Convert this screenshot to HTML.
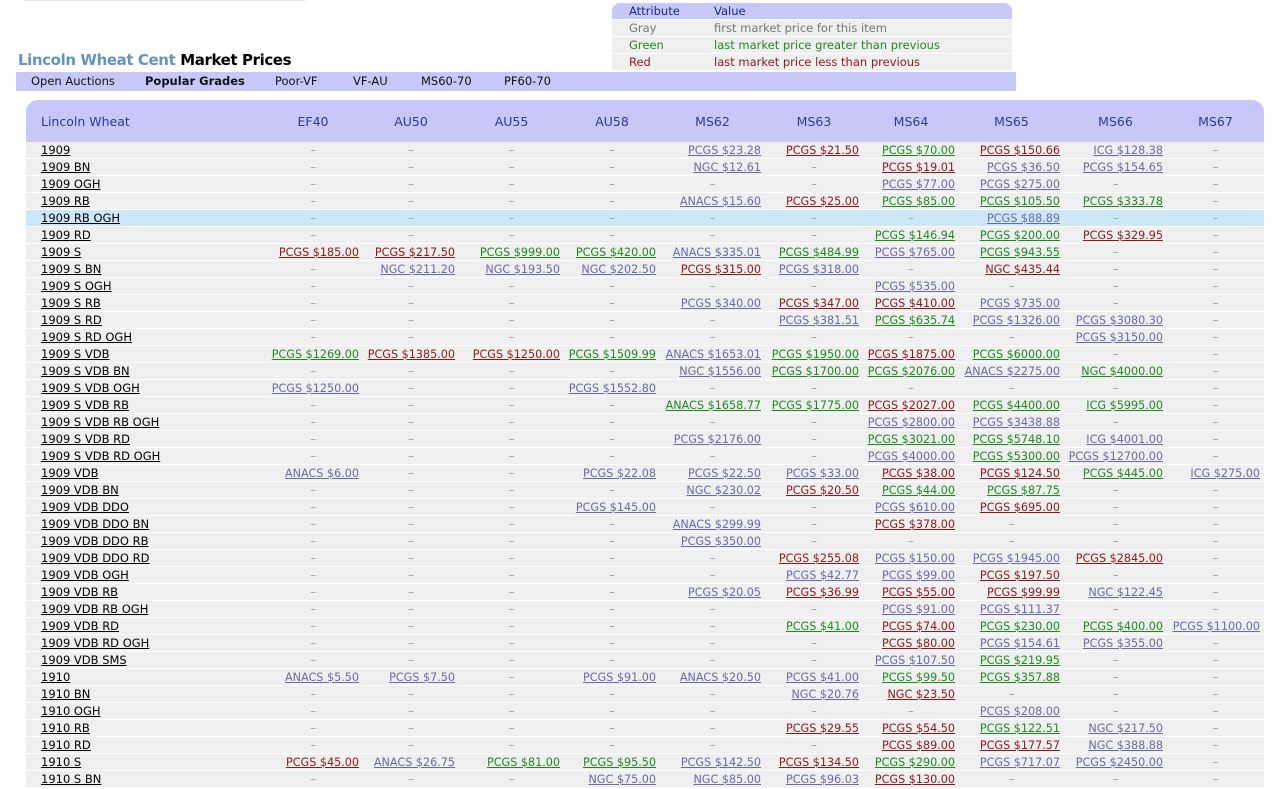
<!DOCTYPE html>
<html><head><meta charset="utf-8"><style>
body{margin:0;background:#fff;font-family:"DejaVu Sans","Liberation Sans",sans-serif;font-size:11px;width:1278px;height:789px;overflow:hidden;position:relative}
.topline{position:absolute;left:25px;top:0;width:280px;height:1px;background:#e4e4e4}
.title{position:absolute;left:18px;top:51px;font-size:15px;font-weight:bold;font-family:"DejaVu Sans",sans-serif;letter-spacing:-0.4px}
.title .a{color:#6494bc}
.nav{position:absolute;left:16px;top:72px;width:1000px;height:19px;background:#c8c8f8}
.nav span{position:absolute;top:2px;color:#111;font-size:11.5px}
.leg{position:absolute;left:612px;top:3px;width:400px;border-collapse:collapse}
.leg td{height:16px;padding:0;border-bottom:1px solid #fff;font-size:11.5px}
.leg tr.h td{background:#c8c8f8;color:#1a2a8a}
.leg tr.h td:first-child{border-top-left-radius:8px}
.leg tr.h td:last-child{border-top-right-radius:8px}
.leg tr td{background:#efefef}
.leg td.c1{width:85px;padding-left:17px}
.main{position:absolute;left:26px;top:100px;width:1238px;border-collapse:collapse;table-layout:fixed}
.main th{background:#c8c8f8;color:#2a3a9a;font-weight:normal;font-size:12.5px;height:42px;padding:0;text-align:center}
.main th:first-child{text-align:left;padding-left:15px;border-top-left-radius:12px}
.main th:last-child{border-top-right-radius:12px}
.main td{height:16px;padding:0 4px 0 0;border-bottom:1px solid #fff;background:#efefef;text-align:right;white-space:nowrap;font-size:11.2px;overflow:hidden}
.main td:first-child{text-align:left;padding-left:15px;color:#000;text-decoration:underline;font-size:11.5px}
.main td.d{text-align:center;padding:0;color:#999}
.main tr.hl td{background:#cce8f8}
.g{color:#6a6aa8;text-decoration:underline}
.G{color:#1e8a1e;text-decoration:underline}
.r{color:#8a1a1a;text-decoration:underline}
</style></head><body>
<div class="topline"></div>
<table class="leg">
<tr class="h"><td class="c1">Attribute</td><td>Value</td></tr>
<tr><td class="c1" style="color:#777">Gray</td><td style="color:#777">first market price for this item</td></tr>
<tr><td class="c1" style="color:#1e8a1e">Green</td><td style="color:#1e8a1e">last market price greater than previous</td></tr>
<tr><td class="c1" style="color:#8a1a1a">Red</td><td style="color:#8a1a1a">last market price less than previous</td></tr>
</table>
<div class="title"><span class="a">Lincoln Wheat Cent</span> Market Prices</div>
<div class="nav"><span style="left:15px">Open Auctions</span><span style="left:129px;font-weight:bold">Popular Grades</span><span style="left:259px">Poor-VF</span><span style="left:337px">VF-AU</span><span style="left:405px">MS60-70</span><span style="left:488px">PF60-70</span></div>
<table class="main">
<colgroup><col style="width:237px"><col style="width:100px"><col style="width:96px"><col style="width:105px"><col style="width:96px"><col style="width:105px"><col style="width:98px"><col style="width:96px"><col style="width:105px"><col style="width:103px"><col style="width:97px"></colgroup>
<tr><th>Lincoln Wheat</th><th>EF40</th><th>AU50</th><th>AU55</th><th>AU58</th><th>MS62</th><th>MS63</th><th>MS64</th><th>MS65</th><th>MS66</th><th>MS67</th></tr>
<tr><td>1909</td><td class="d">–</td><td class="d">–</td><td class="d">–</td><td class="d">–</td><td><span class="g">PCGS $23.28</span></td><td><span class="r">PCGS $21.50</span></td><td><span class="G">PCGS $70.00</span></td><td><span class="r">PCGS $150.66</span></td><td><span class="g">ICG $128.38</span></td><td class="d">–</td></tr>
<tr><td>1909 BN</td><td class="d">–</td><td class="d">–</td><td class="d">–</td><td class="d">–</td><td><span class="g">NGC $12.61</span></td><td class="d">–</td><td><span class="r">PCGS $19.01</span></td><td><span class="g">PCGS $36.50</span></td><td><span class="g">PCGS $154.65</span></td><td class="d">–</td></tr>
<tr><td>1909 OGH</td><td class="d">–</td><td class="d">–</td><td class="d">–</td><td class="d">–</td><td class="d">–</td><td class="d">–</td><td><span class="g">PCGS $77.00</span></td><td><span class="g">PCGS $275.00</span></td><td class="d">–</td><td class="d">–</td></tr>
<tr><td>1909 RB</td><td class="d">–</td><td class="d">–</td><td class="d">–</td><td class="d">–</td><td><span class="g">ANACS $15.60</span></td><td><span class="r">PCGS $25.00</span></td><td><span class="G">PCGS $85.00</span></td><td><span class="G">PCGS $105.50</span></td><td><span class="G">PCGS $333.78</span></td><td class="d">–</td></tr>
<tr class="hl"><td>1909 RB OGH</td><td class="d">–</td><td class="d">–</td><td class="d">–</td><td class="d">–</td><td class="d">–</td><td class="d">–</td><td class="d">–</td><td><span class="g">PCGS $88.89</span></td><td class="d">–</td><td class="d">–</td></tr>
<tr><td>1909 RD</td><td class="d">–</td><td class="d">–</td><td class="d">–</td><td class="d">–</td><td class="d">–</td><td class="d">–</td><td><span class="G">PCGS $146.94</span></td><td><span class="G">PCGS $200.00</span></td><td><span class="r">PCGS $329.95</span></td><td class="d">–</td></tr>
<tr><td>1909 S</td><td><span class="r">PCGS $185.00</span></td><td><span class="r">PCGS $217.50</span></td><td><span class="G">PCGS $999.00</span></td><td><span class="G">PCGS $420.00</span></td><td><span class="g">ANACS $335.01</span></td><td><span class="G">PCGS $484.99</span></td><td><span class="g">PCGS $765.00</span></td><td><span class="G">PCGS $943.55</span></td><td class="d">–</td><td class="d">–</td></tr>
<tr><td>1909 S BN</td><td class="d">–</td><td><span class="g">NGC $211.20</span></td><td><span class="g">NGC $193.50</span></td><td><span class="g">NGC $202.50</span></td><td><span class="r">PCGS $315.00</span></td><td><span class="g">PCGS $318.00</span></td><td class="d">–</td><td><span class="r">NGC $435.44</span></td><td class="d">–</td><td class="d">–</td></tr>
<tr><td>1909 S OGH</td><td class="d">–</td><td class="d">–</td><td class="d">–</td><td class="d">–</td><td class="d">–</td><td class="d">–</td><td><span class="g">PCGS $535.00</span></td><td class="d">–</td><td class="d">–</td><td class="d">–</td></tr>
<tr><td>1909 S RB</td><td class="d">–</td><td class="d">–</td><td class="d">–</td><td class="d">–</td><td><span class="g">PCGS $340.00</span></td><td><span class="r">PCGS $347.00</span></td><td><span class="r">PCGS $410.00</span></td><td><span class="g">PCGS $735.00</span></td><td class="d">–</td><td class="d">–</td></tr>
<tr><td>1909 S RD</td><td class="d">–</td><td class="d">–</td><td class="d">–</td><td class="d">–</td><td class="d">–</td><td><span class="g">PCGS $381.51</span></td><td><span class="G">PCGS $635.74</span></td><td><span class="g">PCGS $1326.00</span></td><td><span class="g">PCGS $3080.30</span></td><td class="d">–</td></tr>
<tr><td>1909 S RD OGH</td><td class="d">–</td><td class="d">–</td><td class="d">–</td><td class="d">–</td><td class="d">–</td><td class="d">–</td><td class="d">–</td><td class="d">–</td><td><span class="g">PCGS $3150.00</span></td><td class="d">–</td></tr>
<tr><td>1909 S VDB</td><td><span class="G">PCGS $1269.00</span></td><td><span class="r">PCGS $1385.00</span></td><td><span class="r">PCGS $1250.00</span></td><td><span class="G">PCGS $1509.99</span></td><td><span class="g">ANACS $1653.01</span></td><td><span class="G">PCGS $1950.00</span></td><td><span class="r">PCGS $1875.00</span></td><td><span class="G">PCGS $6000.00</span></td><td class="d">–</td><td class="d">–</td></tr>
<tr><td>1909 S VDB BN</td><td class="d">–</td><td class="d">–</td><td class="d">–</td><td class="d">–</td><td><span class="g">NGC $1556.00</span></td><td><span class="G">PCGS $1700.00</span></td><td><span class="G">PCGS $2076.00</span></td><td><span class="g">ANACS $2275.00</span></td><td><span class="G">NGC $4000.00</span></td><td class="d">–</td></tr>
<tr><td>1909 S VDB OGH</td><td><span class="g">PCGS $1250.00</span></td><td class="d">–</td><td class="d">–</td><td><span class="g">PCGS $1552.80</span></td><td class="d">–</td><td class="d">–</td><td class="d">–</td><td class="d">–</td><td class="d">–</td><td class="d">–</td></tr>
<tr><td>1909 S VDB RB</td><td class="d">–</td><td class="d">–</td><td class="d">–</td><td class="d">–</td><td><span class="G">ANACS $1658.77</span></td><td><span class="G">PCGS $1775.00</span></td><td><span class="r">PCGS $2027.00</span></td><td><span class="G">PCGS $4400.00</span></td><td><span class="G">ICG $5995.00</span></td><td class="d">–</td></tr>
<tr><td>1909 S VDB RB OGH</td><td class="d">–</td><td class="d">–</td><td class="d">–</td><td class="d">–</td><td class="d">–</td><td class="d">–</td><td><span class="g">PCGS $2800.00</span></td><td><span class="g">PCGS $3438.88</span></td><td class="d">–</td><td class="d">–</td></tr>
<tr><td>1909 S VDB RD</td><td class="d">–</td><td class="d">–</td><td class="d">–</td><td class="d">–</td><td><span class="g">PCGS $2176.00</span></td><td class="d">–</td><td><span class="G">PCGS $3021.00</span></td><td><span class="G">PCGS $5748.10</span></td><td><span class="g">ICG $4001.00</span></td><td class="d">–</td></tr>
<tr><td>1909 S VDB RD OGH</td><td class="d">–</td><td class="d">–</td><td class="d">–</td><td class="d">–</td><td class="d">–</td><td class="d">–</td><td><span class="g">PCGS $4000.00</span></td><td><span class="G">PCGS $5300.00</span></td><td><span class="g">PCGS $12700.00</span></td><td class="d">–</td></tr>
<tr><td>1909 VDB</td><td><span class="g">ANACS $6.00</span></td><td class="d">–</td><td class="d">–</td><td><span class="g">PCGS $22.08</span></td><td><span class="g">PCGS $22.50</span></td><td><span class="g">PCGS $33.00</span></td><td><span class="r">PCGS $38.00</span></td><td><span class="r">PCGS $124.50</span></td><td><span class="G">PCGS $445.00</span></td><td><span class="g">ICG $275.00</span></td></tr>
<tr><td>1909 VDB BN</td><td class="d">–</td><td class="d">–</td><td class="d">–</td><td class="d">–</td><td><span class="g">NGC $230.02</span></td><td><span class="r">PCGS $20.50</span></td><td><span class="G">PCGS $44.00</span></td><td><span class="G">PCGS $87.75</span></td><td class="d">–</td><td class="d">–</td></tr>
<tr><td>1909 VDB DDO</td><td class="d">–</td><td class="d">–</td><td class="d">–</td><td><span class="g">PCGS $145.00</span></td><td class="d">–</td><td class="d">–</td><td><span class="g">PCGS $610.00</span></td><td><span class="r">PCGS $695.00</span></td><td class="d">–</td><td class="d">–</td></tr>
<tr><td>1909 VDB DDO BN</td><td class="d">–</td><td class="d">–</td><td class="d">–</td><td class="d">–</td><td><span class="g">ANACS $299.99</span></td><td class="d">–</td><td><span class="r">PCGS $378.00</span></td><td class="d">–</td><td class="d">–</td><td class="d">–</td></tr>
<tr><td>1909 VDB DDO RB</td><td class="d">–</td><td class="d">–</td><td class="d">–</td><td class="d">–</td><td><span class="g">PCGS $350.00</span></td><td class="d">–</td><td class="d">–</td><td class="d">–</td><td class="d">–</td><td class="d">–</td></tr>
<tr><td>1909 VDB DDO RD</td><td class="d">–</td><td class="d">–</td><td class="d">–</td><td class="d">–</td><td class="d">–</td><td><span class="r">PCGS $255.08</span></td><td><span class="g">PCGS $150.00</span></td><td><span class="g">PCGS $1945.00</span></td><td><span class="r">PCGS $2845.00</span></td><td class="d">–</td></tr>
<tr><td>1909 VDB OGH</td><td class="d">–</td><td class="d">–</td><td class="d">–</td><td class="d">–</td><td class="d">–</td><td><span class="g">PCGS $42.77</span></td><td><span class="g">PCGS $99.00</span></td><td><span class="r">PCGS $197.50</span></td><td class="d">–</td><td class="d">–</td></tr>
<tr><td>1909 VDB RB</td><td class="d">–</td><td class="d">–</td><td class="d">–</td><td class="d">–</td><td><span class="g">PCGS $20.05</span></td><td><span class="r">PCGS $36.99</span></td><td><span class="r">PCGS $55.00</span></td><td><span class="r">PCGS $99.99</span></td><td><span class="g">NGC $122.45</span></td><td class="d">–</td></tr>
<tr><td>1909 VDB RB OGH</td><td class="d">–</td><td class="d">–</td><td class="d">–</td><td class="d">–</td><td class="d">–</td><td class="d">–</td><td><span class="g">PCGS $91.00</span></td><td><span class="g">PCGS $111.37</span></td><td class="d">–</td><td class="d">–</td></tr>
<tr><td>1909 VDB RD</td><td class="d">–</td><td class="d">–</td><td class="d">–</td><td class="d">–</td><td class="d">–</td><td><span class="G">PCGS $41.00</span></td><td><span class="r">PCGS $74.00</span></td><td><span class="G">PCGS $230.00</span></td><td><span class="G">PCGS $400.00</span></td><td><span class="g">PCGS $1100.00</span></td></tr>
<tr><td>1909 VDB RD OGH</td><td class="d">–</td><td class="d">–</td><td class="d">–</td><td class="d">–</td><td class="d">–</td><td class="d">–</td><td><span class="r">PCGS $80.00</span></td><td><span class="g">PCGS $154.61</span></td><td><span class="g">PCGS $355.00</span></td><td class="d">–</td></tr>
<tr><td>1909 VDB SMS</td><td class="d">–</td><td class="d">–</td><td class="d">–</td><td class="d">–</td><td class="d">–</td><td class="d">–</td><td><span class="g">PCGS $107.50</span></td><td><span class="G">PCGS $219.95</span></td><td class="d">–</td><td class="d">–</td></tr>
<tr><td>1910</td><td><span class="g">ANACS $5.50</span></td><td><span class="g">PCGS $7.50</span></td><td class="d">–</td><td><span class="g">PCGS $91.00</span></td><td><span class="g">ANACS $20.50</span></td><td><span class="g">PCGS $41.00</span></td><td><span class="G">PCGS $99.50</span></td><td><span class="G">PCGS $357.88</span></td><td class="d">–</td><td class="d">–</td></tr>
<tr><td>1910 BN</td><td class="d">–</td><td class="d">–</td><td class="d">–</td><td class="d">–</td><td class="d">–</td><td><span class="g">NGC $20.76</span></td><td><span class="r">NGC $23.50</span></td><td class="d">–</td><td class="d">–</td><td class="d">–</td></tr>
<tr><td>1910 OGH</td><td class="d">–</td><td class="d">–</td><td class="d">–</td><td class="d">–</td><td class="d">–</td><td class="d">–</td><td class="d">–</td><td><span class="g">PCGS $208.00</span></td><td class="d">–</td><td class="d">–</td></tr>
<tr><td>1910 RB</td><td class="d">–</td><td class="d">–</td><td class="d">–</td><td class="d">–</td><td class="d">–</td><td><span class="r">PCGS $29.55</span></td><td><span class="r">PCGS $54.50</span></td><td><span class="G">PCGS $122.51</span></td><td><span class="g">NGC $217.50</span></td><td class="d">–</td></tr>
<tr><td>1910 RD</td><td class="d">–</td><td class="d">–</td><td class="d">–</td><td class="d">–</td><td class="d">–</td><td class="d">–</td><td><span class="r">PCGS $89.00</span></td><td><span class="r">PCGS $177.57</span></td><td><span class="g">NGC $388.88</span></td><td class="d">–</td></tr>
<tr><td>1910 S</td><td><span class="r">PCGS $45.00</span></td><td><span class="g">ANACS $26.75</span></td><td><span class="G">PCGS $81.00</span></td><td><span class="G">PCGS $95.50</span></td><td><span class="g">PCGS $142.50</span></td><td><span class="r">PCGS $134.50</span></td><td><span class="G">PCGS $290.00</span></td><td><span class="g">PCGS $717.07</span></td><td><span class="g">PCGS $2450.00</span></td><td class="d">–</td></tr>
<tr><td>1910 S BN</td><td class="d">–</td><td class="d">–</td><td class="d">–</td><td><span class="g">NGC $75.00</span></td><td><span class="g">NGC $85.00</span></td><td><span class="g">PCGS $96.03</span></td><td><span class="r">PCGS $130.00</span></td><td class="d">–</td><td class="d">–</td><td class="d">–</td></tr>
</table>
</body></html>
